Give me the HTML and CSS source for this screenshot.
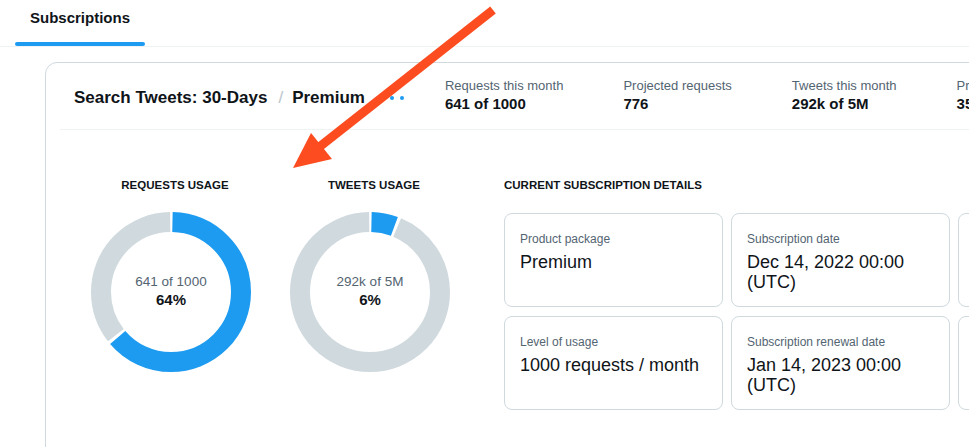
FILE: index.html
```html
<!DOCTYPE html>
<html lang="en">
<head>
<meta charset="utf-8">
<title>Subscriptions</title>
<link rel="stylesheet" href="styles.css">
</head>
<body>
<div class="page">
  <nav class="tabs">
    <div class="tab active"><span class="tab-label">Subscriptions</span></div>
  </nav>
  <main class="content">
    <section class="card">
      <header class="card-header">
        <h1 class="title">Search Tweets: 30-Days<span class="sep">/</span>Premium<span class="more"><i></i><i></i><i></i></span></h1>
        <div class="stats">
          <div class="stat"><div class="stat-label">Requests this month</div><div class="stat-value">641 of 1000</div></div>
          <div class="stat"><div class="stat-label">Projected requests</div><div class="stat-value">776</div></div>
          <div class="stat"><div class="stat-label">Tweets this month</div><div class="stat-value">292k of 5M</div></div>
          <div class="stat"><div class="stat-label">Pr</div><div class="stat-value">35</div></div>
        </div>
      </header>
      <div class="card-body">
        <div class="usage">
          <h2 class="section-title">Requests usage</h2>
          <div class="donut">
            <svg viewBox="0 0 160 160" width="160" height="160">
              <g transform="rotate(-90 80 80)" fill="none" stroke-width="20">
                <circle cx="80" cy="80" r="70" stroke="#cfd9de" stroke-dasharray="155.3 439.82" stroke-dashoffset="-283" />
                <circle cx="80" cy="80" r="70" stroke="#1d9bf0" stroke-dasharray="278.5 439.82" stroke-dashoffset="-1.5" />
              </g>
            </svg>
            <div class="donut-text"><span class="donut-sub">641 of 1000</span><span class="donut-pct">64%</span></div>
          </div>
        </div>
        <div class="usage">
          <h2 class="section-title">Tweets usage</h2>
          <div class="donut">
            <svg viewBox="0 0 160 160" width="160" height="160">
              <g transform="rotate(-90 80 80)" fill="none" stroke-width="20">
                <circle cx="80" cy="80" r="70" stroke="#cfd9de" stroke-dasharray="410.4 439.82" stroke-dashoffset="-27.9" />
                <circle cx="80" cy="80" r="70" stroke="#1d9bf0" stroke-dasharray="23.4 439.82" stroke-dashoffset="-1.5" />
              </g>
            </svg>
            <div class="donut-text"><span class="donut-sub">292k of 5M</span><span class="donut-pct">6%</span></div>
          </div>
        </div>
        <div class="details">
          <h2 class="section-title left">Current subscription details</h2>
          <div class="detail-grid">
            <div class="detail"><div class="detail-label">Product package</div><div class="detail-value">Premium</div></div>
            <div class="detail"><div class="detail-label">Subscription date</div><div class="detail-value">Dec 14, 2022 00:00 (UTC)</div></div>
            <div class="detail"></div>
            <div class="detail"><div class="detail-label">Level of usage</div><div class="detail-value">1000 requests / month</div></div>
            <div class="detail"><div class="detail-label">Subscription renewal date</div><div class="detail-value">Jan 14, 2023 00:00 (UTC)</div></div>
            <div class="detail"></div>
          </div>
        </div>
      </div>
    </section>
  </main>
  <svg class="annotation" width="969" height="447" viewBox="0 0 969 447">
    <line x1="493" y1="10" x2="318" y2="148" stroke="#fc4c20" stroke-width="9" />
    <polygon points="293,168 311,133 332,159" fill="#fc4c20" />
  </svg>
</div>
</body>
</html>
```
FILE: styles.css
```css
* { box-sizing: border-box; }
html, body {
  margin: 0;
  padding: 0;
  width: 969px;
  height: 447px;
  overflow: hidden;
  background: #ffffff;
}
body {
  font-family: "Liberation Sans", Arial, sans-serif;
  color: #0f1419;
}
.page {
  position: relative;
  width: 969px;
  height: 447px;
  overflow: hidden;
}
.tabs {
  display: flex;
  height: 47px;
  padding-left: 15px;
  border-bottom: 1px solid #eff3f4;
}
.tab {
  display: flex;
  flex-direction: column;
  justify-content: space-between;
  width: 130px;
  height: 46px;
  padding-top: 8px;
}
.tab-label {
  display: block;
  text-align: center;
  font-size: 15px;
  line-height: 20px;
  font-weight: 700;
  color: #0f1419;
}
.tab.active::after {
  content: "";
  display: block;
  height: 4px;
  border-radius: 2px;
  background: #1d9bf0;
}
.content {
  padding: 15px 0 0 45px;
}
.card {
  width: 1100px;
  height: 420px;
  border: 1px solid #cfd9de;
  border-radius: 12px;
}
.card-header {
  display: flex;
  align-items: center;
  height: 67px;
  margin: 0 14px;
  padding-left: 14px;
  border-bottom: 1px solid #eff3f4;
}
.title {
  display: flex;
  align-items: center;
  margin: 0;
  padding-top: 4px;
  font-size: 17px;
  line-height: 22px;
  font-weight: 700;
  white-space: nowrap;
}
.sep {
  margin: 0 9px 0 11px;
  color: #b9c5cc;
  font-weight: 400;
}
.more {
  display: flex;
  gap: 6px;
  margin-left: 15px;
}
.more i {
  display: block;
  width: 4px;
  height: 4px;
  border-radius: 50%;
  background: #1d9bf0;
}
.stats {
  display: flex;
  gap: 60px;
  margin-left: 41px;
  white-space: nowrap;
}
.stat-label {
  font-size: 13px;
  line-height: 16px;
  color: #536471;
}
.stat-value {
  font-size: 15px;
  line-height: 20px;
  font-weight: 700;
  color: #0f1419;
}
.card-body {
  display: flex;
  padding: 47px 0 0 45px;
}
.usage {
  flex: none;
  width: 168px;
  margin-right: 31px;
}
.usage:nth-child(2) { margin-right: 46px; }
.section-title {
  margin: 0;
  font-size: 11.5px;
  line-height: 16px;
  font-weight: 700;
  text-transform: uppercase;
  text-align: center;
  color: #0f1419;
}
.section-title.left { text-align: left; }
.donut {
  display: grid;
  width: 160px;
  height: 160px;
  margin-top: 19px;
}
.donut svg, .donut-text {
  grid-area: 1 / 1;
}
.donut svg { display: block; }
.donut-text {
  display: flex;
  flex-direction: column;
  align-items: center;
  justify-content: center;
  padding-bottom: 2px;
}
.donut-sub {
  font-size: 13.5px;
  line-height: 18px;
  color: #536471;
}
.donut-pct {
  font-size: 15px;
  line-height: 18px;
  font-weight: 700;
  color: #0f1419;
}
.details {
  flex: none;
}
.detail-grid {
  display: grid;
  grid-template-columns: repeat(3, 219px);
  grid-auto-rows: 94px;
  gap: 9px 8px;
  margin-top: 20px;
}
.detail {
  border: 1px solid #cfd9de;
  border-radius: 8px;
  padding: 17px 15px 0;
}
.detail-label {
  font-size: 12px;
  line-height: 16px;
  color: #536471;
}
.detail-value {
  margin-top: 5px;
  font-size: 18px;
  line-height: 20px;
  color: #0f1419;
}
.annotation {
  position: absolute;
  left: 0;
  top: 0;
  pointer-events: none;
}
```
